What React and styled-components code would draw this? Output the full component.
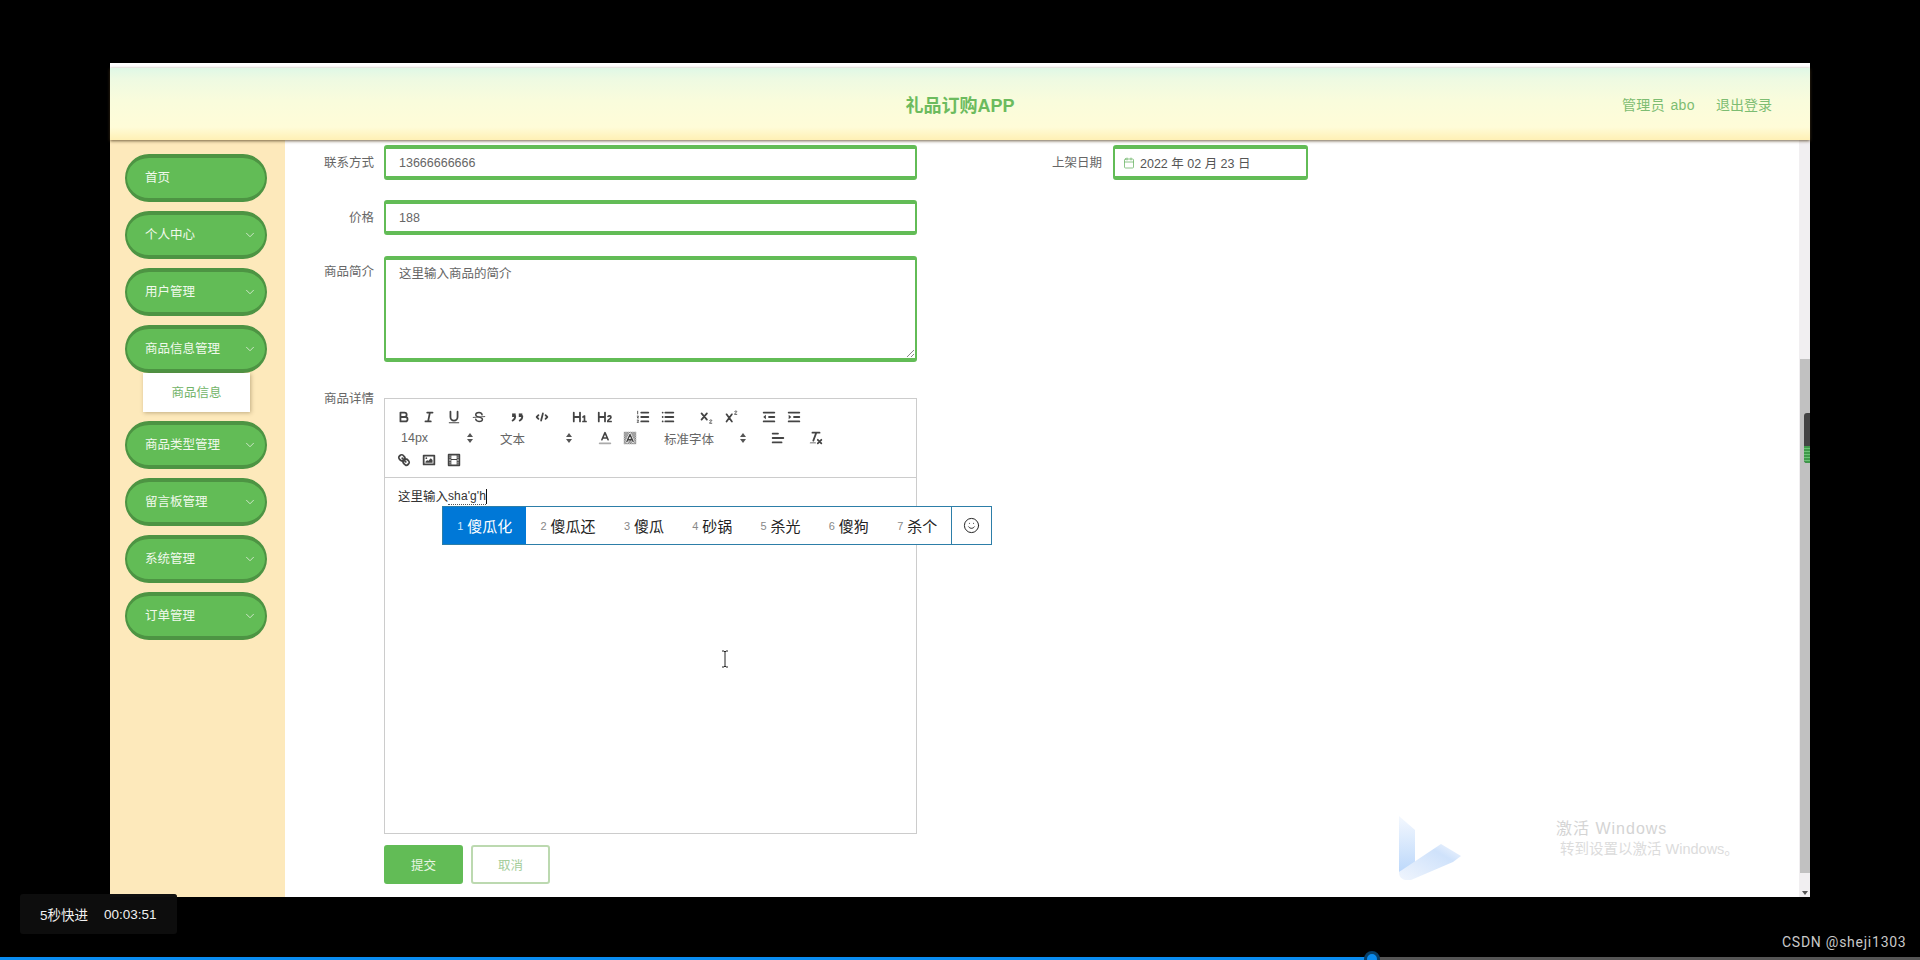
import React from 'react';
import styled, { createGlobalStyle } from 'styled-components';
import { ChevronDown, Calendar, Smile } from 'lucide-react';

const FONT = '"Liberation Sans", "Noto Sans CJK SC", sans-serif';
const GREEN = '#62bc56';

const Global = createGlobalStyle`
  html, body { margin: 0; padding: 0; background: #000; }
  body { font-family: ${FONT}; overflow: hidden; }
  * { box-sizing: border-box; }
`;

const Stage = styled.div`
  position: relative; width: 1920px; height: 960px; background: #000;
  padding: 63px 110px; overflow: hidden;
`;
const Win = styled.div`
  height: 834px; display: flex; flex-direction: column; background: #fff; padding-top: 5px;
`;
const Header = styled.header`
  position: relative; z-index: 2; flex: 0 0 72px;
  display: grid; grid-template-columns: 1fr auto 1fr; align-items: center;
  padding: 0 38px 1px 38px;
  background: linear-gradient(180deg, #dff8e6 0%, #eefae2 15%, #f9fcdc 45%, #fffcd8 82%, #fff0b5 100%);
  box-shadow: 0 1px 3px 0 rgba(80, 60, 30, .8);
`;
const Title = styled.div`
  grid-column: 2; color: #6cbb5e; font-size: 18px; font-weight: 700; margin-top: 1px;
`;
const UserBox = styled.div`
  grid-column: 3; justify-self: end; display: flex; gap: 21px; color: #7dbd72; font-size: 14px;
`;
const UserName = styled.span` word-spacing: 1px; letter-spacing: .4px; `;
const Body = styled.div` flex: 1; min-height: 0; display: flex; `;
const Side = styled.nav`
  flex: 0 0 175px; background: #fde9bb; padding: 14px 18px 0 15px;
  display: flex; flex-direction: column; align-items: stretch;
`;
const Pill = styled.div`
  height: 48px; margin-bottom: ${p => p.$open ? 0 : 9}px;
  display: flex; align-items: center; justify-content: space-between;
  padding: 0 8px 3px 18px; color: #f1f9ec; font-size: 12.5px;
  background: ${GREEN}; border: solid #4d9443; border-width: 4px 2px; border-radius: 24px;
  svg { margin-top: 2px; }
`;
const Sub = styled.div`
  align-self: flex-start; margin: 0 0 9px 18px; width: 107px; height: 39px;
  display: flex; align-items: center; justify-content: center; padding-bottom: 2px;
  background: #fff; color: #72b468; font-size: 12.5px;
  box-shadow: 1px 1px 4px rgba(120, 100, 60, .45);
`;
const Main = styled.main`
  flex: 1; min-width: 0; padding-top: 5px; overflow: hidden;
  display: flex; flex-direction: column;
`;
const Row = styled.div` display: flex; align-items: flex-start; margin-bottom: ${p => p.$mb ?? 20}px; `;
const Label = styled.label`
  flex: 0 0 ${p => p.$w ?? 89}px; text-align: right; color: #666; font-size: 12.5px;
  height: ${p => p.$lh ?? 35}px; padding-top: 1px;
  line-height: ${p => p.$lh ?? 35}px; margin-top: ${p => p.$mt ?? 0}px;
`;
const Field = styled.div`
  margin-left: ${p => p.$ml ?? 10}px; width: ${p => p.$w ?? 533}px; height: ${p => p.$h ?? 35}px;
  display: flex; align-items: ${p => p.$top ? 'flex-start' : 'center'}; gap: 5px;
  padding: ${p => p.$top ? '3px 0 0 13px' : `0 0 0 ${p.$pl ?? 13}px`};
  border: solid ${GREEN}; border-width: 4px 2px; border-radius: 3px;
  background: #fff; color: ${p => p.$dark ? '#555' : '#666'}; font-size: 12.5px; position: relative;
`;
const Grip = styled.svg` position: absolute; right: 0; bottom: 0; `;
const Editor = styled.div`
  margin-left: 10px; width: 533px; height: 436px; border: 1px solid #ccc;
  display: flex; flex-direction: column;
`;
const Toolbar = styled.div`
  flex: 0 0 79px; padding: 7px 0 0 6px; border-bottom: 1px solid #ccc;
`;
const ToolRow = styled.div` display: flex; height: 21.5px; align-items: center; `;
const Group = styled.div` display: flex; margin-left: ${p => p.$ml ?? 0}px; `;
const Tool = styled.span`
  width: 25px; height: 21px; display: flex; align-items: center; justify-content: center;
  svg { width: 16px; height: 16px; fill: none; stroke: #444; stroke-width: 2px; stroke-linecap: round; stroke-linejoin: round; }
  svg .f { fill: #444; stroke: none; }
  svg .t { stroke-width: 1px; }
`;
const Picker = styled.span`
  width: ${p => p.$w}px; margin-left: ${p => p.$ml ?? 0}px; height: 21px; padding: 0 3px 0 10px;
  display: flex; align-items: center; justify-content: space-between;
  color: #666; font-size: 12.5px;
`;
const Content = styled.div`
  flex: 1; padding: 11px 13px; font-size: 12.5px; color: #333; line-height: 17px;
  display: flex; align-items: flex-start;
`;
const Compose = styled.span`
  border-bottom: 1px dotted #555; line-height: 15px; font-size: 12px; letter-spacing: .1px;
`;
const Caret = styled.span` display: inline-block; width: 1px; height: 15px; background: #111; `;
const Actions = styled.div` display: flex; gap: 8px; margin: 11px 0 0 99px; `;
const Btn = styled.button`
  width: 79px; height: 39px; border-radius: 3px; font: 12.5px ${FONT}; padding: 0;
  color: ${p => p.$primary ? '#e9f6e4' : '#a4cd9a'};
  background: ${p => p.$primary ? GREEN : '#fff'};
  border: 2px solid ${p => p.$primary ? GREEN : '#bcd9b0'};
`;
const Track = styled.aside`
  flex: 0 0 11px; background: #f1eff1; display: flex; flex-direction: column; padding-top: 219px;
`;
const Thumb = styled.div` flex: 1; background: #c1c1c1; margin-left: 1px; `;
const TrackEnd = styled.div`
  flex: 0 0 24px; display: flex; align-items: flex-end; justify-content: center; padding-bottom: 2px;
`;
const Arrow = styled.i`
  width: 0; height: 0; border: 3px solid transparent; border-top: 4px solid #555; border-bottom: 0;
`;
const Gutter = styled.div`
  position: absolute; left: 1804px; top: 413px; width: 6px; height: 50px; border-radius: 3px 0 0 3px;
  background: #444; overflow: hidden; display: flex; align-items: flex-end;
`;
const GutterFill = styled.div`
  width: 100%; height: 17px;
  background: repeating-linear-gradient(180deg, #3f9a4a 0 2px, #6cc276 2px 3px);
`;
const Ime = styled.div`
  position: absolute; left: 442px; top: 506px; width: 550px; height: 39px; display: flex;
  background: #fff; border: 1px solid #2d7ea8; font-size: 15px; color: #222;
`;
const Cand = styled.div`
  display: flex; align-items: center; gap: 2px; padding: 0 14px 0 14.3px;
  color: ${p => p.$on ? '#fff' : '#222'};
  background: ${p => p.$on ? '#0078d7' : 'transparent'};
  white-space: nowrap;
  small { font-size: 11px; color: ${p => p.$on ? '#cfe6fa' : '#888'}; width: 7px; margin-right: 1px; }
`;
const Emoji = styled.div`
  margin-left: auto; width: 40px; border-left: 1px solid #2d7ea8;
  display: flex; align-items: center; justify-content: center; color: #222;
`;
const Cursor = styled.svg` position: absolute; left: 721px; top: 650px; `;
const Osd = styled.div`
  position: absolute; left: 20px; top: 894px; width: 157px; height: 40px; border-radius: 3px;
  background: rgba(14, 14, 14, .96); color: #f0f0f0; font-size: 13.5px;
  display: flex; align-items: center; gap: 16px; padding-left: 20px;
`;
const OsdTop = styled.div`
  position: absolute; left: 110px; top: 894px; width: 67px; height: 3px; background: #6f6650;
  border-radius: 0 3px 0 0;
`;
const Credit = styled.div`
  position: absolute; left: 1782px; top: 934px; color: #c9c9c9; font: 14px Roboto, sans-serif; letter-spacing: .75px;
`;
const Bar = styled.div`
  position: absolute; left: 0; right: 0; bottom: 0; height: 3px;
  background: linear-gradient(90deg, #0a8cf0 0 1372px, #555 1372px);
`;
const Knob = styled.div`
  position: absolute; left: 1364px; top: 951px; width: 16px; height: 16px; border-radius: 50%;
  background: #0a8cf0; border: 3px solid #083f68;
`;
const Mark = styled.svg` position: absolute; left: 1399px; top: 812px; `;
const Activate = styled.div`
  position: absolute; left: 1556px; top: 821px; color: #d4d4d4; line-height: 1;
  font-family: "Liberation Sans", "Noto Sans CJK SC", sans-serif;
`;
const ActivateA = styled.div` font-size: 16px; letter-spacing: 1px; margin-bottom: 5px; `;
const ActivateB = styled.div` font-size: 14.5px; color: #dcdcdc; padding-left: 4px; `;

const I = ({ children }) => <Tool><svg viewBox="0 0 18 18">{children}</svg></Tool>;
const Updown = () => (
  <svg width="6" height="10" viewBox="0 0 6 10"><path d="M0 4L3 0l3 4zM0 6l3 4 3-4z" fill="#555" /></svg>
);

const Bold = () => <I><path d="M5 4h4.5a2.5 2.5 0 0 1 0 5H5zM5 9h5.5a2.5 2.5 0 0 1 0 5H5z" /></I>;
const Italic = () => <I><path d="M7 4h6M5 14h6M8 14l2-10" /></I>;
const Underline = () => <I><path d="M5 3v6a4 4 0 0 0 8 0V3" /><rect className="f" x="3" y="15" width="12" height="1" rx=".5" /></I>;
const Strike = () => <I><path className="t" d="M15.5 8.5l-13 1" /><path strokeWidth="1.6" d="M12.5 6.5C12.2 5 10.8 4 9 4 7 4 5.3 5 5.3 6.5c0 3.4 7.6 1.8 7.6 5 0 1.500-1.900 2.500-3.900 2.500-1.800 0-3.400-1-3.700-2.500" /></I>;
const Quote = () => <I><rect className="f" x="3.500" y="5" width="4" height="4" /><rect className="f" x="11" y="5" width="4" height="4" /><path d="M7 8c0 4-3 5-3 5M15 8c0 4-3 5-3 5" /></I>;
const Code = () => <I><path d="M5 7L3 9l2 2M13 7l2 2-2 2M10 5l-2 8" /></I>;
const H1 = () => <I><path className="f" d="M10,4V14a1,1,0,0,1-2,0V10H3v4a1,1,0,0,1-2,0V4A1,1,0,0,1,3,4V8H8V4a1,1,0,0,1,2,0Zm6.06787,9.209H14.98975V7.59863a.54085.54085,0,0,0-.605-.60547h-.62744a1.01119,1.01119,0,0,0-.748.29688L11.645,8.56641a.5435.5435,0,0,0-.022.8584l.28613.30762a.53861.53861,0,0,0,.84717.0332l.09912-.08789a1.2137,1.2137,0,0,0,.2417-.35254h.02246s-.01123.30859-.01123.60547V13.209H12.041a.54085.54085,0,0,0-.605.60547v.43945a.54085.54085,0,0,0,.605.60547h4.02686a.54085.54085,0,0,0,.605-.60547v-.43945A.54085.54085,0,0,0,16.06787,13.209Z" /></I>;
const H2 = () => <I><path className="f" d="M16.73975,13.81445v.43945a.54085.54085,0,0,1-.605.60547H11.855a.58392.58392,0,0,1-.64893-.60547V14.0127c0-2.90527,3.39941-3.42187,3.39941-4.55469a.77675.77675,0,0,0-.84717-.78125,1.17684,1.17684,0,0,0-.83594.38477c-.2749.26367-.561.374-.85791.13184l-.4292-.34082c-.30811-.24219-.38525-.51758-.1543-.81445a2.97155,2.97155,0,0,1,2.45361-1.17676,2.45393,2.45393,0,0,1,2.68408,2.40918c0,2.45312-3.1792,2.92676-3.27832,3.93848h2.79443A.54085.54085,0,0,1,16.73975,13.81445ZM9,3A.99974.99974,0,0,0,8,4V8H3V4A1,1,0,0,0,1,4V14a1,1,0,0,0,2,0V10H8v4a1,1,0,0,0,2,0V4A.99974.99974,0,0,0,9,3Z" /></I>;
const Ol = () => <I><path d="M7 4h8M7 9h8M7 14h8" /><path className="t" d="M3 2.500v3M2.500 8h1.500l-1.500 2h1.500M2.500 12.500h1.500l-.800 1.200.800 1.300h-1.500" /></I>;
const Ul = () => <I><path d="M6 4h9M6 9h9M6 14h9M3 4h0M3 9h0M3 14h0" /></I>;
const Sub2 = () => <I><path d="M4 5l6 7M10 5l-6 7" /><path className="t" d="M13 13c.5-1 2.500-1 2.500 0s-2.500 1.500-2.500 3h2.500" /></I>;
const Sup2 = () => <I><path d="M4 6l6 8M10 6l-6 8" /><path className="t" d="M13 3c.5-1 2.500-1 2.500 0s-2.500 1.500-2.500 3h2.500" /></I>;
const Outdent = () => <I><path d="M3 14h12M3 4h12M9 9h6" /><path className="f" d="M5.500 6.500v5L2.500 9z" /></I>;
const Indent = () => <I><path d="M3 14h12M3 4h12M9 9h6" /><path className="f" d="M3 6.500v5L6 9z" /></I>;
const TextColor = () => <I><path d="M3 15h12" stroke="#aaa" /><path strokeWidth="1.800" d="M5.500 11L9 3l3.500 8M11.600 9H6.400" /></I>;
const Bg = () => (
  <I>
    <defs><pattern id="hatch" width="2" height="2" patternUnits="userSpaceOnUse"><rect className="f" width="1" height="1" /><rect className="f" x="1" y="1" width="1" height="1" /></pattern></defs>
    <rect x="2" y="2" width="14" height="14" fill="url(#hatch)" stroke="none" />
    <path stroke="#fff" strokeWidth="3" d="M5.500 13L9 5l3.500 8" />
    <path strokeWidth="1.600" d="M5.500 13L9 5l3.500 8M11.600 11H6.400" />
  </I>
);
const Align = () => <I><path d="M3 9h12M3 14h10M3 4h6" /></I>;
const Clean = () => <I><path d="M5 3h8M6 12l3.350-9M11 11l4 4M15 11l-4 4" /><rect className="f" x="2" y="14" width="7" height="1" rx=".5" /></I>;
const Link = () => <I><path d="M7 7l4 4M8.900 4.577a3.476 3.476 0 0 1 .36 4.679A3.476 3.476 0 0 1 4.577 8.900C3.185 7.500 2.035 6.400 4.217 4.217S7.500 3.185 8.900 4.577zM13.423 9.100a3.476 3.476 0 0 0-4.679-.36 3.476 3.476 0 0 0 .36 4.679c1.392 1.392 2.500 2.542 4.679.36s1.032-3.279-.36-4.679z" /></I>;
const Img = () => <I><rect x="3" y="4" width="12" height="10" /><circle className="f" cx="6" cy="7" r="1" /><path className="f" d="M5 12v-1l2-2 1 1 3-3 2 2v3z" /></I>;
const Video = () => <I><rect x="3" y="3" width="12" height="12" /><path className="f" d="M5 3h1v12H5zM12 3h1v12h-1zM5 8h8v1H5zM3 5h3v1H3zM3 7h3v1H3zM3 10h3v1H3zM3 12h3v1H3zM12 5h3v1h-3zM12 7h3v1h-3zM12 10h3v1h-3zM12 12h3v1h-3z" /></I>;

const menus = [
  { t: '首页', plain: true },
  { t: '个人中心' },
  { t: '用户管理' },
  { t: '商品信息管理', sub: '商品信息' },
  { t: '商品类型管理' },
  { t: '留言板管理' },
  { t: '系统管理' },
  { t: '订单管理' },
];
const cands = [
  ['2', '傻瓜还'], ['3', '傻瓜'], ['4', '砂锅'], ['5', '杀光'], ['6', '傻狗'], ['7', '杀个'],
];

export default function App() {
  return (
    <Stage>
      <Global />
      <Win>
        <Header>
          <Title>礼品订购APP</Title>
          <UserBox><UserName>管理员 abo</UserName><span>退出登录</span></UserBox>
        </Header>
        <Body>
          <Side>
            {menus.map(m => (
              <React.Fragment key={m.t}>
                <Pill $open={!!m.sub}>
                  <span>{m.t}</span>
                  {!m.plain && <ChevronDown size={14} color="#dcecd6" strokeWidth={1.5} />}
                </Pill>
                {m.sub && <Sub>{m.sub}</Sub>}
              </React.Fragment>
            ))}
          </Side>
          <Main>
            <Row>
              <Label>联系方式</Label>
              <Field>13666666666</Field>
              <Label $w={185}>上架日期</Label>
              <Field $ml={11} $w={195} $pl={8} $dark>
                <Calendar size={12} color="#6fb66a" strokeWidth={1.6} />
                <span>2022 年 02 月 23 日</span>
              </Field>
            </Row>
            <Row $mb={21}>
              <Label>价格</Label>
              <Field>188</Field>
            </Row>
            <Row $mb={36}>
              <Label $lh={30}>商品简介</Label>
              <Field $h={106} $top>
                这里输入商品的简介
                <Grip width="9" height="9" viewBox="0 0 9 9"><path d="M8 1L1 8M8 5L5 8" stroke="#888" fill="none" /></Grip>
              </Field>
            </Row>
            <Row $mb={0}>
              <Label $lh={30} $mt={-15}>商品详情</Label>
              <Editor>
                <Toolbar>
                  <ToolRow>
                    <Group><Bold /><Italic /><Underline /><Strike /></Group>
                    <Group $ml={13}><Quote /><Code /></Group>
                    <Group $ml={13}><H1 /><H2 /></Group>
                    <Group $ml={13}><Ol /><Ul /></Group>
                    <Group $ml={13}><Sub2 /><Sup2 /></Group>
                    <Group $ml={13}><Outdent /><Indent /></Group>
                  </ToolRow>
                  <ToolRow>
                    <Picker $w={85}>14px<Updown /></Picker>
                    <Picker $w={85} $ml={14}>文本<Updown /></Picker>
                    <Group $ml={17}><TextColor /><Bg /></Group>
                    <Picker $w={95} $ml={12}>标准字体<Updown /></Picker>
                    <Group $ml={16}><Align /></Group>
                    <Group $ml={13}><Clean /></Group>
                  </ToolRow>
                  <ToolRow>
                    <Group><Link /><Img /><Video /></Group>
                  </ToolRow>
                </Toolbar>
                <Content>
                  这里输入<Compose>sha'g'h</Compose><Caret />
                </Content>
              </Editor>
            </Row>
            <Actions>
              <Btn $primary>提交</Btn>
              <Btn>取消</Btn>
            </Actions>
          </Main>
          <Track>
            <Thumb />
            <TrackEnd><Arrow /></TrackEnd>
          </Track>
        </Body>
      </Win>

      <Gutter><GutterFill /></Gutter>

      <Ime>
        <Cand $on><small>1</small>傻瓜化</Cand>
        {cands.map(([n, w]) => <Cand key={n}><small>{n}</small>{w}</Cand>)}
        <Emoji><Smile size={17} strokeWidth={1.4} /></Emoji>
      </Ime>

      <Cursor width="8" height="18" viewBox="0 0 8 18">
        <path d="M1 1h2l1 1 1-1h2M4 2v14M1 17h2l1-1 1 1h2" stroke="#222" strokeWidth="1" fill="none" />
      </Cursor>

      <Mark width="64" height="68" viewBox="0 0 64 68">
        <defs>
          <linearGradient id="bingA" x1="0" y1="0" x2="0" y2="1"><stop offset="0" stopColor="#f4f8fe" /><stop offset="1" stopColor="#bcd8fb" /></linearGradient>
          <linearGradient id="bingB" x1="0" y1="1" x2="1" y2="0"><stop offset="0" stopColor="#f0f5fd" /><stop offset=".7" stopColor="#cfe2fb" /><stop offset="1" stopColor="#f5f8fe" /></linearGradient>
        </defs>
        <path d="M0 4l16 14v38L0 60z" fill="url(#bingA)" />
        <path d="M0 60l42-28 20 12-8 6-42 18c-8 1-12-2-12-8z" fill="url(#bingB)" />
      </Mark>
      <Activate>
        <ActivateA>激活 Windows</ActivateA>
        <ActivateB>转到设置以激活 Windows。</ActivateB>
      </Activate>

      <OsdTop />
      <Osd><span>5秒快进</span><span>00:03:51</span></Osd>
      <Credit>CSDN @sheji1303</Credit>
      <Bar />
      <Knob />
    </Stage>
  );
}
